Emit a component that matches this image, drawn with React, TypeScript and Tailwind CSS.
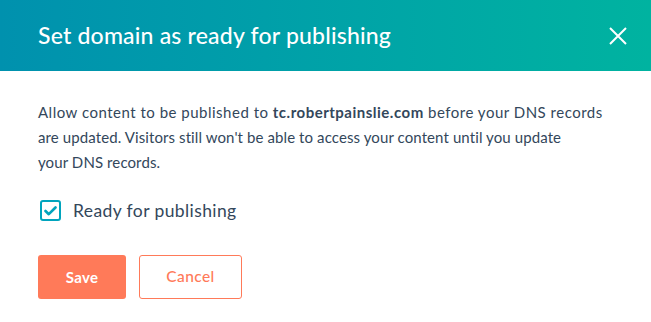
export default function App() {
  return (
    <div className="w-[651px] h-[322px] bg-white font-['Lato','Open_Sans',sans-serif] text-[#33475b]">
      {/* Header */}
      <div className="h-[71px] flex items-center justify-between pl-[38px] pr-[24px] bg-gradient-to-r from-[#0091ae] to-[#00b3a0]">
        <h1 className="text-white text-[23px] font-medium tracking-[0.2px]">
          Set domain as ready for publishing
        </h1>
        <button className="text-white w-[18px] h-[18px] flex items-center justify-center">
          <svg width="18" height="18" viewBox="0 0 18 18" fill="none" stroke="white" strokeWidth="2">
            <path d="M1 1 L17 17 M17 1 L1 17" />
          </svg>
        </button>
      </div>

      {/* Body */}
      <div className="px-[38px] pt-[29px]">
        <p className="text-[15px] leading-[25px] tracking-[0.1px] whitespace-nowrap">
          <span className="tracking-[0.5px]">
            Allow content to be published to <strong className="font-bold">tc.robertpainslie.com</strong> before your DNS records
          </span>
          <br />
          are updated. Visitors still won't be able to access your content until you update
          <br />
          your DNS records.
        </p>

        <label className="mt-[25px] h-[21px] flex items-center">
          <span className="ml-[2px] w-[21px] h-[21px] border-2 border-[#00a4bd] rounded-[3px] flex items-center justify-center bg-white">
            <svg width="13" height="10" viewBox="0 0 13 10" fill="none" stroke="#00a4bd" strokeWidth="2.6" strokeLinecap="round" strokeLinejoin="round">
              <path d="M1.5 5 L4.8 8.2 L11.5 1.5" />
            </svg>
          </span>
          <span className="ml-[12px] text-[17.5px] leading-[21px] tracking-[0.4px]">Ready for publishing</span>
        </label>

        <div className="mt-[34px] flex gap-[13px]">
          <button className="w-[88px] h-[44px] rounded-[3px] bg-[#ff7a59] text-white text-[15px] font-bold tracking-[0.3px]">
            Save
          </button>
          <button className="w-[103px] h-[44px] rounded-[3px] border border-[#ff7a59] bg-white text-[#ff7a59] text-[15.5px] font-medium tracking-[0.4px]">
            Cancel
          </button>
        </div>
      </div>
    </div>
  );
}
